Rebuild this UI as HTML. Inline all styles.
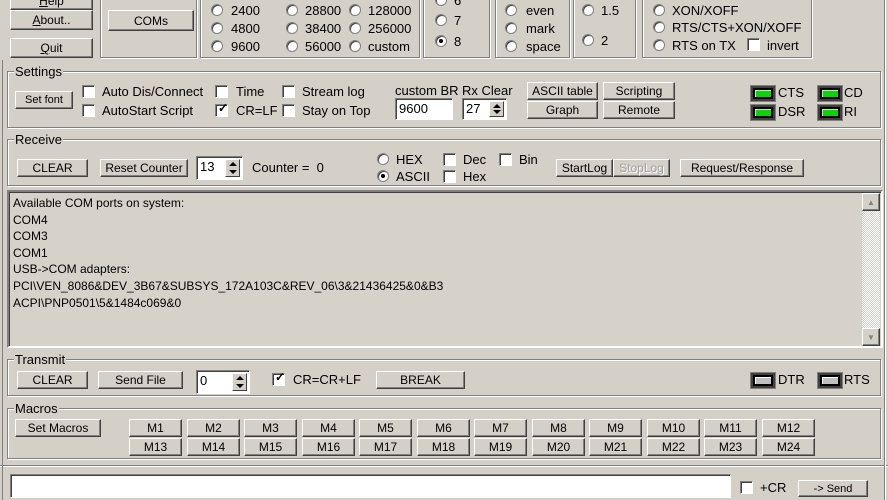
<!DOCTYPE html>
<html><head><meta charset="utf-8">
<style>
*{box-sizing:border-box}
body{margin:0;width:888px;height:500px;overflow:hidden;background:#d4d0c8;font-family:"Liberation Sans",Arial,sans-serif;font-size:12px;color:#000;position:relative}
.a{position:absolute;white-space:nowrap}
.g{position:absolute;border:1px solid #808080;box-shadow:1px 1px 0 #fff,inset 1px 1px 0 #fff}
.gl{position:absolute;background:#d4d0c8;padding:0 1px;line-height:13px}
.b{position:absolute;background:#d4d0c8;border:1px solid;border-color:#fff #404040 #404040 #fff;box-shadow:inset -1px -1px 0 #808080;text-align:center;font-size:12px;display:flex;align-items:center;justify-content:center}
.r{position:absolute;width:12px;height:12px;border-radius:50%;background:#fff;border:1px solid #808080;box-shadow:inset 1px 1px 0 #404040}
.r.on::after{content:"";position:absolute;left:3px;top:3px;width:4px;height:4px;border-radius:50%;background:#000}
.c{position:absolute;width:13px;height:13px;background:#fff;border:1px solid;border-color:#808080 #fff #fff #808080;box-shadow:inset 1px 1px 0 #404040}
.s{position:absolute;background:#fff;border:1px solid;border-color:#808080 #fff #fff #808080;box-shadow:inset 1px 1px 0 #404040;padding:2px 0 0 3px;font-size:13px}
.sp{position:absolute;right:2px;top:2px;width:15px;bottom:2px;background:#d4d0c8;border:1px solid;border-color:#fff #404040 #404040 #fff}
.sp::before{content:"";position:absolute;left:3px;top:2px;border:4px solid transparent;border-top:0;border-bottom:4px solid #000}
.sp::after{content:"";position:absolute;left:3px;bottom:2px;border:4px solid transparent;border-bottom:0;border-top:4px solid #000}
.led{position:absolute;width:24px;height:15px;background:#000;border:2px solid #404040;outline:1px solid #808080}
.led i{position:absolute;left:2px;top:2px;right:2px;bottom:2px;background:#10d010;border-top:1px solid #a0ffa0;border-left:1px solid #a0ffa0}
.led.gy i{background:#c0c0c0;border-color:#fff}
</style></head><body>
<!-- top row -->
<div class="b" style="left:10px;top:-8px;width:83px;height:18px"><u>H</u>elp</div>
<div class="b" style="left:10px;top:10px;width:83px;height:20px"><u>A</u>bout..</div>
<div class="b" style="left:10px;top:38px;width:83px;height:20px"><u>Q</u>uit</div>
<div class="g" style="left:100px;top:-5px;width:97px;height:63px"></div>
<div class="b" style="left:108px;top:10px;width:86px;height:21px">COMs</div>
<div class="g" style="left:200px;top:-5px;width:220px;height:63px"></div>
<div class="r" style="left:211px;top:4px"></div><div class="a" style="left:231px;top:3px;font-size:13px">2400</div>
<div class="r" style="left:211px;top:22px"></div><div class="a" style="left:231px;top:21px;font-size:13px">4800</div>
<div class="r" style="left:211px;top:40px"></div><div class="a" style="left:231px;top:39px;font-size:13px">9600</div>
<div class="r" style="left:286px;top:4px"></div><div class="a" style="left:305px;top:3px;font-size:13px">28800</div>
<div class="r" style="left:286px;top:22px"></div><div class="a" style="left:305px;top:21px;font-size:13px">38400</div>
<div class="r" style="left:286px;top:40px"></div><div class="a" style="left:305px;top:39px;font-size:13px">56000</div>
<div class="r" style="left:349px;top:4px"></div><div class="a" style="left:368px;top:3px;font-size:13px">128000</div>
<div class="r" style="left:349px;top:22px"></div><div class="a" style="left:368px;top:21px;font-size:13px">256000</div>
<div class="r" style="left:349px;top:40px"></div><div class="a" style="left:368px;top:39px;font-size:13px">custom</div>
<div class="g" style="left:423px;top:-5px;width:67px;height:63px"></div>
<div class="r" style="left:435px;top:-6px"></div><div class="a" style="left:454px;top:-7px;font-size:13px">6</div>
<div class="r" style="left:435px;top:14px"></div><div class="a" style="left:454px;top:13px;font-size:13px">7</div>
<div class="r on" style="left:435px;top:35px"></div><div class="a" style="left:454px;top:34px;font-size:13px">8</div>
<div class="g" style="left:495px;top:-5px;width:75px;height:63px"></div>
<div class="r" style="left:505px;top:4px"></div><div class="a" style="left:526px;top:3px;font-size:13px">even</div>
<div class="r" style="left:505px;top:22px"></div><div class="a" style="left:526px;top:21px;font-size:13px">mark</div>
<div class="r" style="left:505px;top:40px"></div><div class="a" style="left:526px;top:39px;font-size:13px">space</div>
<div class="g" style="left:573px;top:-5px;width:63px;height:63px"></div>
<div class="r" style="left:582px;top:4px"></div><div class="a" style="left:601px;top:3px;font-size:13px">1.5</div>
<div class="r" style="left:582px;top:34px"></div><div class="a" style="left:601px;top:33px;font-size:13px">2</div>
<div class="g" style="left:642px;top:-5px;width:170px;height:63px"></div>
<div class="r" style="left:653px;top:4px"></div><div class="a" style="left:672px;top:3px;font-size:13px">XON/XOFF</div>
<div class="r" style="left:653px;top:21px"></div><div class="a" style="left:672px;top:20px;font-size:13px">RTS/CTS+XON/XOFF</div>
<div class="r" style="left:653px;top:39px"></div><div class="a" style="left:672px;top:38px;font-size:13px">RTS on TX</div>
<div class="c" style="left:747px;top:38px"></div><div class="a" style="left:767px;top:38px;font-size:13px">invert</div>

<!-- settings -->
<div class="g" style="left:7px;top:71px;width:874px;height:57px"></div>
<div class="gl" style="left:14px;top:65px;font-size:13px">Settings</div>
<div class="b" style="left:15px;top:91px;width:58px;height:18px;font-size:11px">Set font</div>
<div class="c" style="left:82px;top:85px"></div><div class="a" style="left:102px;top:84px;font-size:13px">Auto Dis/Connect</div>
<div class="c" style="left:82px;top:104px"></div><div class="a" style="left:102px;top:103px;font-size:13px">AutoStart Script</div>
<div class="c" style="left:215px;top:85px"></div><div class="a" style="left:236px;top:84px;font-size:13px">Time</div>
<div class="c" style="left:215px;top:104px"></div><div class="a" style="left:218px;top:101px;font-size:12px;font-weight:bold">✓</div><div class="a" style="left:236px;top:103px;font-size:13px">CR=LF</div>
<div class="c" style="left:282px;top:85px"></div><div class="a" style="left:302px;top:84px;font-size:13px">Stream log</div>
<div class="c" style="left:282px;top:104px"></div><div class="a" style="left:302px;top:103px;font-size:13px">Stay on Top</div>
<div class="a" style="left:395px;top:83px;font-size:13px">custom BR</div>
<div class="s" style="left:395px;top:98px;width:58px;height:22px">9600</div>
<div class="a" style="left:462px;top:83px;font-size:13px">Rx Clear</div>
<div class="s" style="left:462px;top:98px;width:45px;height:22px">27<div class="sp"></div></div>
<div class="b" style="left:527px;top:82px;width:71px;height:18px">ASCII table</div>
<div class="b" style="left:527px;top:101px;width:71px;height:18px">Graph</div>
<div class="b" style="left:603px;top:82px;width:72px;height:18px">Scripting</div>
<div class="b" style="left:603px;top:101px;width:72px;height:18px">Remote</div>
<div class="led" style="left:751px;top:86px"><i></i></div><div class="a" style="left:778px;top:85px;font-size:13px">CTS</div>
<div class="led" style="left:751px;top:105px"><i></i></div><div class="a" style="left:778px;top:104px;font-size:13px">DSR</div>
<div class="led" style="left:818px;top:86px"><i></i></div><div class="a" style="left:844px;top:85px;font-size:13px">CD</div>
<div class="led" style="left:818px;top:105px"><i></i></div><div class="a" style="left:844px;top:104px;font-size:13px">RI</div>

<!-- receive -->
<div class="g" style="left:7px;top:139px;width:874px;height:47px"></div>
<div class="gl" style="left:14px;top:133px;font-size:13px">Receive</div>
<div class="b" style="left:17px;top:159px;width:71px;height:18px">CLEAR</div>
<div class="b" style="left:100px;top:159px;width:88px;height:18px">Reset Counter</div>
<div class="s" style="left:196px;top:156px;width:47px;height:24px">13<div class="sp"></div></div>
<div class="a" style="left:252px;top:160px;font-size:13px">Counter =&nbsp; 0</div>
<div class="r" style="left:377px;top:153px"></div><div class="a" style="left:396px;top:152px;font-size:13px">HEX</div>
<div class="r on" style="left:377px;top:170px"></div><div class="a" style="left:396px;top:169px;font-size:13px">ASCII</div>
<div class="c" style="left:443px;top:153px"></div><div class="a" style="left:463px;top:152px;font-size:13px">Dec</div>
<div class="c" style="left:443px;top:170px"></div><div class="a" style="left:463px;top:169px;font-size:13px">Hex</div>
<div class="c" style="left:499px;top:153px"></div><div class="a" style="left:519px;top:152px;font-size:13px">Bin</div>
<div class="b" style="left:556px;top:159px;width:57px;height:18px">StartLog</div>
<div class="b" style="left:613px;top:159px;width:57px;height:18px;color:#a0a0a0;text-shadow:1px 1px 0 #fff">StopLog</div>
<div class="b" style="left:680px;top:159px;width:124px;height:18px">Request/Response</div>

<!-- output -->
<div class="a" style="left:7px;top:190px;width:876px;height:158px;border:2px solid;border-color:#808080 #fff #fff #808080;box-shadow:inset 1px 1px 0 #404040;background:#d6d2ca"></div>
<div class="a" style="left:13px;top:195px;font-size:12px;line-height:16.6px;white-space:pre">Available COM ports on system:
COM4
COM3
COM1
USB-&gt;COM adapters:
PCI\VEN_8086&amp;DEV_3B67&amp;SUBSYS_172A103C&amp;REV_06\3&amp;21436425&amp;0&amp;B3
ACPI\PNP0501\5&amp;1484c069&amp;0</div>
<div class="a" style="left:862px;top:193px;width:18px;height:153px;background:repeating-conic-gradient(#fff 0 25%,#d4d0c8 0 50%) 0 0/2px 2px"></div>
<div class="b" style="left:862px;top:193px;width:18px;height:18px;font-size:8px;color:#808080">▲</div>
<div class="b" style="left:862px;top:328px;width:18px;height:18px;font-size:8px;color:#808080">▼</div>

<!-- transmit -->
<div class="g" style="left:7px;top:359px;width:874px;height:37px"></div>
<div class="gl" style="left:14px;top:353px;font-size:13px">Transmit</div>
<div class="b" style="left:17px;top:371px;width:71px;height:18px">CLEAR</div>
<div class="b" style="left:98px;top:371px;width:85px;height:18px">Send File</div>
<div class="s" style="left:196px;top:370px;width:54px;height:24px">0<div class="sp"></div></div>
<div class="c" style="left:272px;top:373px"></div><div class="a" style="left:275px;top:370px;font-size:12px;font-weight:bold">✓</div><div class="a" style="left:293px;top:372px;font-size:13px">CR=CR+LF</div>
<div class="b" style="left:376px;top:371px;width:89px;height:18px">BREAK</div>
<div class="led gy" style="left:751px;top:373px"><i></i></div><div class="a" style="left:778px;top:372px;font-size:13px">DTR</div>
<div class="led gy" style="left:818px;top:373px"><i></i></div><div class="a" style="left:844px;top:372px;font-size:13px">RTS</div>

<!-- macros -->
<div class="g" style="left:7px;top:408px;width:874px;height:51px"></div>
<div class="gl" style="left:14px;top:402px;font-size:13px">Macros</div>
<div class="b" style="left:15px;top:419px;width:86px;height:18px">Set Macros</div>
<div class="b" style="left:129px;top:419px;width:53px;height:18px">M1</div><div class="b" style="left:129px;top:438px;width:53px;height:18px">M13</div>
<div class="b" style="left:187px;top:419px;width:53px;height:18px">M2</div><div class="b" style="left:187px;top:438px;width:53px;height:18px">M14</div>
<div class="b" style="left:244px;top:419px;width:53px;height:18px">M3</div><div class="b" style="left:244px;top:438px;width:53px;height:18px">M15</div>
<div class="b" style="left:302px;top:419px;width:53px;height:18px">M4</div><div class="b" style="left:302px;top:438px;width:53px;height:18px">M16</div>
<div class="b" style="left:359px;top:419px;width:53px;height:18px">M5</div><div class="b" style="left:359px;top:438px;width:53px;height:18px">M17</div>
<div class="b" style="left:417px;top:419px;width:53px;height:18px">M6</div><div class="b" style="left:417px;top:438px;width:53px;height:18px">M18</div>
<div class="b" style="left:474px;top:419px;width:53px;height:18px">M7</div><div class="b" style="left:474px;top:438px;width:53px;height:18px">M19</div>
<div class="b" style="left:532px;top:419px;width:53px;height:18px">M8</div><div class="b" style="left:532px;top:438px;width:53px;height:18px">M20</div>
<div class="b" style="left:589px;top:419px;width:53px;height:18px">M9</div><div class="b" style="left:589px;top:438px;width:53px;height:18px">M21</div>
<div class="b" style="left:647px;top:419px;width:53px;height:18px">M10</div><div class="b" style="left:647px;top:438px;width:53px;height:18px">M22</div>
<div class="b" style="left:704px;top:419px;width:53px;height:18px">M11</div><div class="b" style="left:704px;top:438px;width:53px;height:18px">M23</div>
<div class="b" style="left:762px;top:419px;width:53px;height:18px">M12</div><div class="b" style="left:762px;top:438px;width:53px;height:18px">M24</div>

<!-- send line -->
<div class="a" style="left:0;top:465px;width:888px;height:1px;background:#808080"></div>
<div class="a" style="left:0;top:466px;width:888px;height:1px;background:#fff"></div>
<div class="s" style="left:10px;top:474px;width:721px;height:24px"></div>
<div class="c" style="left:740px;top:481px"></div><div class="a" style="left:760px;top:480px;font-size:13px">+CR</div>
<div class="b" style="left:798px;top:480px;width:70px;height:17px;font-size:11px">-&gt; Send</div>

<!-- window edge -->
<div class="a" style="left:884px;top:0;width:1px;height:500px;background:#808080"></div>
<div class="a" style="left:885px;top:0;width:1px;height:500px;background:#fff"></div>
<div class="a" style="left:2px;top:60px;width:1px;height:440px;background:#808080"></div>
</body></html>
